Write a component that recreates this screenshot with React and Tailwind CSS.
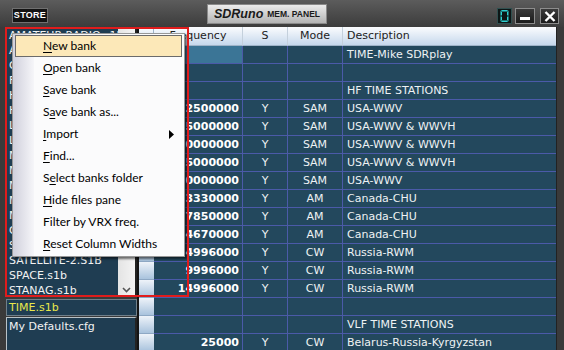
import React from 'react';

const files = [
  'AMATEUR RADIO.s1b', 'AIRBAND.s1b', 'CB.s1b', 'FM BROADCAST.s1b', 'HAM.s1b', 'HF UTILITY.s1b',
  'LW BROADCAST.s1b', 'LOCAL.s1b', 'MARINE.s1b', 'METEO.s1b', 'MILITARY.s1b', 'MW BROADCAST.s1b',
  'MISC.s1b', 'CUSTOM.s1b', 'SHORTWAVE.s1b', 'SATELLITE-2.S1B', 'SPACE.s1b', 'STANAG.s1b',
];

const rows = [
  { f: '', s: '', m: '', d: 'TIME-Mike SDRplay', sel: true },
  { f: '', s: '', m: '', d: '' },
  { f: '', s: '', m: '', d: 'HF TIME STATIONS' },
  { f: '2500000', s: 'Y', m: 'SAM', d: 'USA-WWV' },
  { f: '5000000', s: 'Y', m: 'SAM', d: 'USA-WWV & WWVH' },
  { f: '10000000', s: 'Y', m: 'SAM', d: 'USA-WWV & WWVH' },
  { f: '15000000', s: 'Y', m: 'SAM', d: 'USA-WWV & WWVH' },
  { f: '20000000', s: 'Y', m: 'SAM', d: 'USA-WWV' },
  { f: '3330000', s: 'Y', m: 'AM', d: 'Canada-CHU' },
  { f: '7850000', s: 'Y', m: 'AM', d: 'Canada-CHU' },
  { f: '14670000', s: 'Y', m: 'AM', d: 'Canada-CHU' },
  { f: '4996000', s: 'Y', m: 'CW', d: 'Russia-RWM' },
  { f: '9996000', s: 'Y', m: 'CW', d: 'Russia-RWM' },
  { f: '14996000', s: 'Y', m: 'CW', d: 'Russia-RWM' },
  { f: '', s: '', m: '', d: '' },
  { f: '', s: '', m: '', d: 'VLF TIME STATIONS' },
  { f: '25000', s: 'Y', m: 'CW', d: 'Belarus-Russia-Kyrgyzstan' },
];

// access keys underlined like a win32 popup menu
const menu = [
  { pre: '', u: 'N', post: 'ew bank' },
  { pre: '', u: 'O', post: 'pen bank' },
  { pre: '', u: 'S', post: 'ave bank' },
  { pre: 'S', u: 'a', post: 've bank as...' },
  { pre: '', u: 'I', post: 'mport', sub: true },
  { pre: '', u: 'F', post: 'ind...' },
  { pre: 'S', u: 'e', post: 'lect banks folder' },
  { pre: '', u: 'H', post: 'ide files pane' },
  { pre: 'Filter by VRX freq.', u: '', post: '' },
  { pre: '', u: 'R', post: 'eset Column Widths' },
];

const cell = 'border-r border-b border-[#4b5aa8] h-[18px] leading-[18px] whitespace-nowrap overflow-hidden';

const SevenSegZero = () => (
  <svg width="15" height="16" viewBox="0 0 15 16">
    <rect x="0.5" y="0.5" width="14" height="15" fill="#0d1616" stroke="#2f4f4f" />
    <g fill="#2fd0d0">
      <polygon points="4,2 11,2 10,3.5 5,3.5" />
      <polygon points="3.5,2.5 5,4 5,7.3 3.5,7.8" />
      <polygon points="11.5,2.5 11.5,7.8 10,7.3 10,4" />
      <polygon points="3.5,8.2 5,8.7 5,12 3.5,13.5" />
      <polygon points="11.5,8.2 11.5,13.5 10,12 10,8.7" />
      <polygon points="5,12.5 10,12.5 11,14 4,14" />
    </g>
  </svg>
);

export default function App() {
  return (
    <div className="relative w-[564px] h-[350px] overflow-hidden bg-[#3a3a3a] flex flex-col font-['DejaVu_Sans',sans-serif]">
      {/* title bar */}
      <div className="h-[27px] shrink-0 flex items-start pl-[12px] pr-[5px] bg-gradient-to-b from-[#5c5c5c] to-[#3c3c3c]">
        <div className="mt-[8px] w-[36px] h-[15px] bg-[#141414] border border-[#707070] flex items-center justify-center text-white font-bold text-[9px] font-['Liberation_Sans',sans-serif] tracking-[0.3px]">
          STORE
        </div>
        <div className="mt-[4px] ml-[159px] w-[120px] h-[20px] bg-gradient-to-b from-[#ececec] to-[#b4b4b4] border border-[#8a8a8a] flex items-center justify-center gap-[4px] text-[#1a1a1a] font-['Liberation_Sans',sans-serif] font-bold">
          <span className="italic text-[12.5px] leading-none">SDRuno</span>
          <span className="text-[8.5px] leading-none">MEM. PANEL</span>
        </div>
        <div className="ml-auto mt-[8px] flex items-start">
          <SevenSegZero />
          <div className="ml-[3px] w-[20px] h-[16px] bg-gradient-to-b from-[#3a3a3a] to-[#1c1c1c] border border-[#8c8c8c] relative">
            <div className="absolute left-[4px] bottom-[3px] w-[10px] h-[3px] bg-white" />
          </div>
          <div className="ml-[5px] w-[19px] h-[16px] bg-gradient-to-b from-[#3a3a3a] to-[#1c1c1c] border border-[#8c8c8c] flex items-center justify-center">
            <svg width="12" height="11" viewBox="0 0 12 11">
              <path d="M1.5 1 L10.5 10 M10.5 1 L1.5 10" stroke="#fff" strokeWidth="2.4" />
            </svg>
          </div>
        </div>
      </div>

      {/* body */}
      <div className="flex-1 flex min-h-0 pr-[7px]">
        {/* files pane */}
        <div className="w-[137px] shrink-0 pl-[6px] flex flex-col">
          <div className="h-[270px] flex">
            <div className="flex-1 bg-[#1f3d52] overflow-hidden text-[11px] text-[#f2f2f2] pt-[1px]">
              {files.map((f) => (
                <div key={f} className="h-[15px] leading-[16px] pl-[3px] whitespace-nowrap">{f}</div>
              ))}
            </div>
            <div className="w-[17px] bg-gradient-to-r from-[#e4e4e4] to-[#f4f4f4] flex flex-col justify-end items-center pb-[4px]">
              <svg width="9" height="6" viewBox="0 0 9 6">
                <path d="M1 1 L4.5 4.5 L8 1" stroke="#555" strokeWidth="1.6" fill="none" />
              </svg>
            </div>
            <div className="w-[2px] bg-[#222]" />
          </div>
          <div className="mt-[2px] h-[17px] bg-[#1f3d52] border border-[#6f7f8a] leading-[15px] pl-[2px] text-[11px] text-[#e8e84a]">
            TIME.s1b
          </div>
          <div className="mt-[1px] flex-1 bg-[#1f3d52] border-t border-l border-[#b8c2c8] border-r-2 border-r-[#222] pl-[2px] pt-[1px] text-[11px] text-[#f2f2f2] leading-[15px]">
            My Defaults.cfg
          </div>
        </div>
        <div className="w-[2px] shrink-0 bg-[#141414]" />

        {/* table */}
        <div className="flex-1 bg-[#23485d] border-r border-[#222] overflow-hidden text-[11px]">
          <div className="grid grid-cols-[15px_89px_45px_55px_214px]">
            <div className="h-[19px] bg-gradient-to-b from-[#fbfcfe] to-[#c6d8ec] border-r border-b border-[#9fb3c8]" />
            <div className="h-[19px] leading-[18px] text-center text-[#222] bg-gradient-to-b from-[#fbfcfe] to-[#c6d8ec] border-r border-b border-[#c4d0dc] border-b-[#9fb3c8]">Frequency</div>
            <div className="h-[19px] leading-[18px] text-center text-[#222] bg-gradient-to-b from-[#fbfcfe] to-[#c6d8ec] border-r border-b border-[#c4d0dc] border-b-[#9fb3c8]">S</div>
            <div className="h-[19px] leading-[18px] text-center text-[#222] bg-gradient-to-b from-[#fbfcfe] to-[#c6d8ec] border-r border-b border-[#c4d0dc] border-b-[#9fb3c8]">Mode</div>
            <div className="h-[19px] leading-[18px] pl-[4px] text-[#222] bg-gradient-to-b from-[#fbfcfe] to-[#c6d8ec] border-b border-[#9fb3c8]">Description</div>
            {rows.map((r, i) => (
              <React.Fragment key={i}>
                <div className="h-[18px] bg-gradient-to-b from-[#eef3f9] to-[#a9c3dd] border-b border-[#8ea8c4]" />
                <div className={`${cell} text-right pr-[3px] font-bold text-white ${r.sel ? 'bg-[#3b7596]' : ''}`}>{r.f}</div>
                <div className={`${cell} text-center text-[#eef2f4]`}>{r.s}</div>
                <div className={`${cell} text-center text-[#eef2f4]`}>{r.m}</div>
                <div className={`${cell} border-r-0 pl-[4px] text-[#eef2f4]`}>{r.d}</div>
              </React.Fragment>
            ))}
          </div>
        </div>
      </div>

      {/* popup menu */}
      <div className="absolute left-[12px] top-[33px] w-[173px] bg-[#fbfbfc] border border-[#979797] shadow-[2px_2px_2px_rgba(0,0,0,0.55)] py-[1px] font-['Lato',sans-serif] text-[12px] text-black">
        <div className="absolute left-0 top-0 bottom-0 w-[21px] bg-gradient-to-r from-[#d0d0dc] to-[#f6f6f9]" />
        {menu.map((m, i) => (
          <div
            key={i}
            className={`relative h-[22px] mx-[2px] flex items-center pl-[27px] border ${i === 0 ? 'bg-[#fce8b8] border-[#6b6b6b]' : 'border-transparent'}`}
          >
            <span>
              {m.pre}
              {m.u && <span className="underline underline-offset-2">{m.u}</span>}
              {m.post}
            </span>
            {m.sub && (
              <svg className="absolute right-[7px] top-[6px]" width="5" height="9" viewBox="0 0 5 9">
                <path d="M0 0 L5 4.5 L0 9 Z" fill="#000" />
              </svg>
            )}
          </div>
        ))}
      </div>

      {/* red annotation frame */}
      <div className="absolute left-[5px] top-[27px] w-[184px] h-[270px] border-2 border-[#e01c1c] pointer-events-none" />
    </div>
  );
}
